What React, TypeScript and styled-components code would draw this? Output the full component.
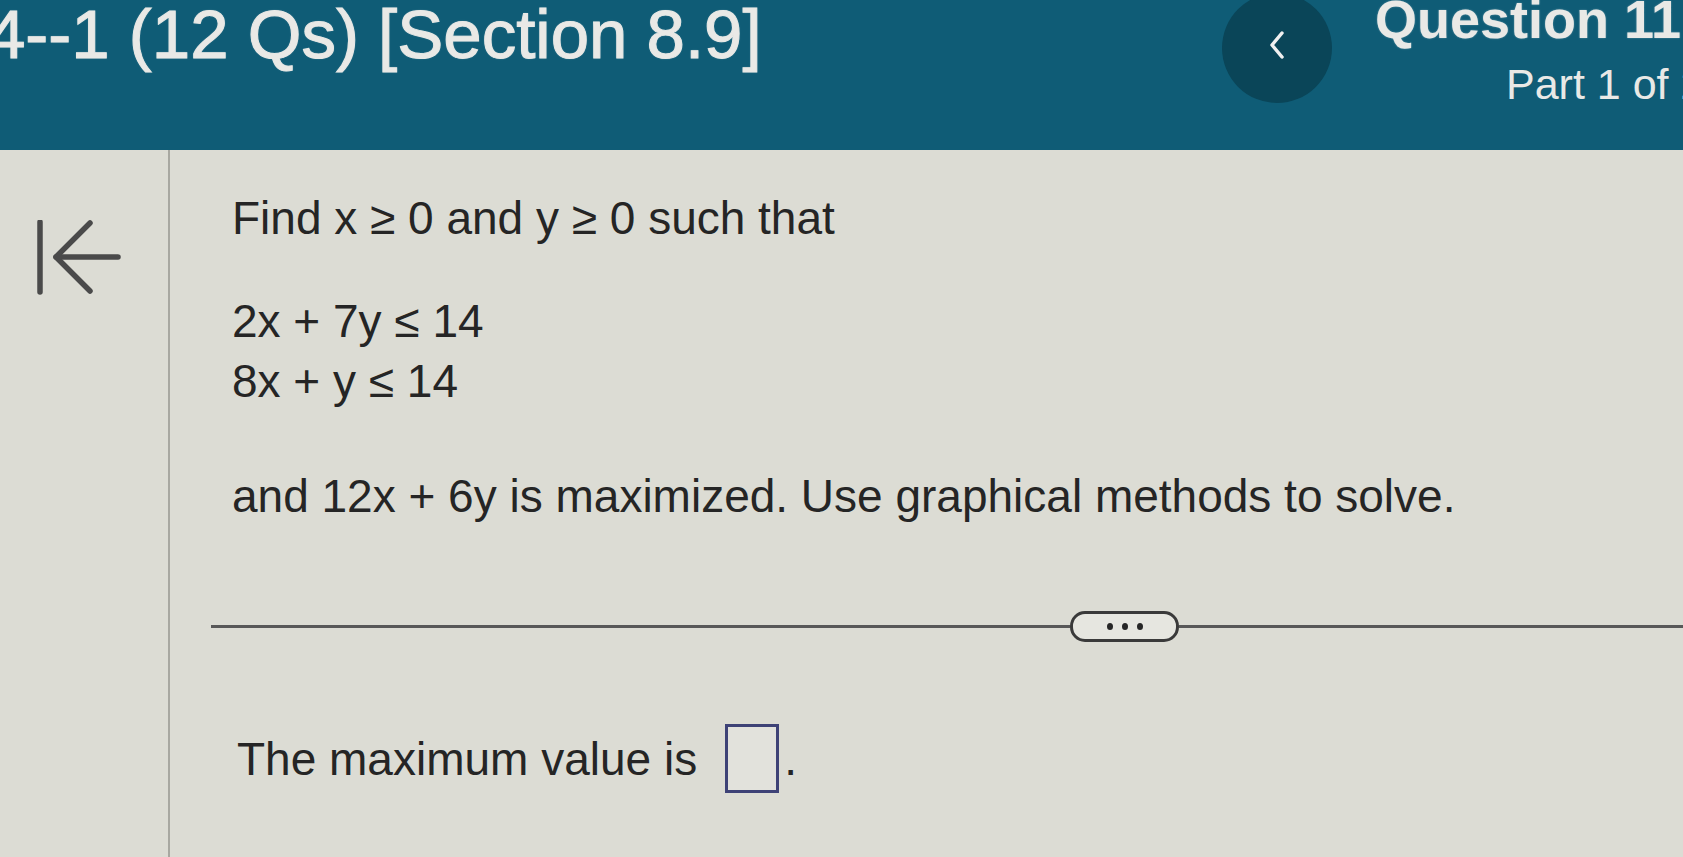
import styled, { createGlobalStyle } from "styled-components";

// tela de exercício: cabeçalho azul-petróleo, barra lateral e enunciado

const EstiloGlobal = createGlobalStyle`
  * {
    margin: 0;
    padding: 0;
    box-sizing: border-box;
  }

  html, body {
    width: 100%;
    height: 100%;
    overflow: hidden;
  }

  body {
    background-color: #dcdcd4;
    color: #252525;
    font-family: "Liberation Sans", Arial, Helvetica, sans-serif;
  }
`;

const Pagina = styled.div`
  width: 1683px;
  height: 857px;
  display: flex;
  flex-direction: column;
  overflow: hidden;
`;

// CABEÇALHO
const Cabecalho = styled.header`
  flex: 0 0 150px;
  display: flex;
  align-items: flex-start;
  background-color: #0f5c76;
  color: #e9e9e6;
  overflow: hidden;
`;

const TituloTarefa = styled.h1`
  flex: 1;
  margin-left: -13px;
  margin-top: 0;
  font-size: 69px;
  line-height: 69px;
  font-weight: 400;
  white-space: nowrap;
  -webkit-text-stroke: 1px #e9e9e6;
  text-shadow: 0 0 2px rgba(255, 255, 255, 0.35);
`;

const BotaoVoltar = styled.button`
  flex: 0 0 110px;
  height: 110px;
  margin-top: -7px;
  margin-right: 43px;
  border: none;
  border-radius: 50%;
  background-color: #0a4558;
  color: #f0f0f0;
  display: flex;
  align-items: center;
  justify-content: center;
  padding-bottom: 6px;
  cursor: pointer;
`;

// min-width: 0 para o bloco não crescer com o texto cortado na borda
const InfoQuestao = styled.div`
  flex: 0 0 308px;
  min-width: 0;
  display: flex;
  flex-direction: column;
  white-space: nowrap;
`;

const NumeroQuestao = styled.div`
  margin-top: -7px;
  font-size: 54px;
  line-height: 53px;
  font-weight: 700;
  text-shadow: 0 0 2px rgba(255, 255, 255, 0.35);
`;

const ParteQuestao = styled.div`
  margin-top: 17px;
  margin-left: 131px;
  font-size: 43px;
  line-height: 43px;
`;

// CORPO
const Corpo = styled.div`
  flex: 1;
  display: flex;
`;

const BarraLateral = styled.aside`
  flex: 0 0 170px;
  border-right: 2px solid #a8a8a1;
  padding: 70px 0 0 35px;
  color: #4a4a4a;
`;

const Conteudo = styled.main`
  flex: 1;
  padding: 38px 0 0 62px;
  display: flex;
  flex-direction: column;
  font-size: 46px;
  line-height: 60px;
`;

const Linha = styled.p<{ $espaco: number; $recuo?: number }>`
  margin-top: ${(p) => p.$espaco}px;
  margin-left: ${(p) => p.$recuo ?? 0}px;
  white-space: nowrap;
`;

const Divisor = styled.div`
  margin: 85px 0 0 -21px;
  display: flex;
  align-items: center;

  &::before,
  &::after {
    content: "";
    height: 3px;
    background-color: #585858;
  }

  &::before {
    flex: 0 0 859px;
  }

  &::after {
    flex: 1;
  }
`;

const BotaoMais = styled.div`
  flex: 0 0 109px;
  height: 31px;
  border: 3px solid #3a3a3a;
  border-radius: 15px;
  background-color: #e6e6e0;
  display: flex;
  align-items: center;
  justify-content: center;
  gap: 9px;
`;

const Ponto = styled.span`
  width: 6px;
  height: 7px;
  border-radius: 50%;
  background-color: #262626;
`;

const CaixaResposta = styled.span`
  display: inline-block;
  width: 54px;
  height: 69px;
  margin-left: 28px;
  vertical-align: -18px;
  border: 3px solid #3e4276;
  background-color: #e2e2dc;
`;

const PontoFinal = styled.span`
  margin-left: 5px;
`;

function IconeVoltarInicio() {
  return (
    <svg width="90" height="76" viewBox="0 0 90 76" fill="none">
      <g stroke="currentColor" strokeWidth="5.5" strokeLinecap="round" strokeLinejoin="round">
        <line x1="5" y1="2" x2="5" y2="72" />
        <line x1="21" y1="37" x2="83" y2="37" />
        <polyline points="55,3 21,37 55,71" />
      </g>
    </svg>
  );
}

export default function App() {
  return (
    <>
      <EstiloGlobal />
      <Pagina>
        <Cabecalho>
          <TituloTarefa>4--1 (12 Qs) [Section 8.9]</TituloTarefa>
          <BotaoVoltar aria-label="Questão anterior">
            <svg width="16" height="30" viewBox="0 0 16 30" fill="none">
              <polyline
                points="13,3 3,15 13,27"
                stroke="currentColor"
                strokeWidth="3.5"
                strokeLinecap="round"
                strokeLinejoin="round"
              />
            </svg>
          </BotaoVoltar>
          <InfoQuestao>
            <NumeroQuestao>Question 11</NumeroQuestao>
            <ParteQuestao>Part 1 of 2</ParteQuestao>
          </InfoQuestao>
        </Cabecalho>

        <Corpo>
          <BarraLateral>
            <IconeVoltarInicio />
          </BarraLateral>

          <Conteudo>
            <Linha $espaco={0}>Find x ≥ 0 and y ≥ 0 such that</Linha>
            <Linha $espaco={43}>2x + 7y ≤ 14</Linha>
            <Linha $espaco={0}>8x + y ≤ 14</Linha>
            <Linha $espaco={55}>
              and 12x + 6y is maximized. Use graphical methods to solve.
            </Linha>

            <Divisor>
              <BotaoMais>
                <Ponto />
                <Ponto />
                <Ponto />
              </BotaoMais>
            </Divisor>

            <Linha $espaco={82} $recuo={5}>
              The maximum value is
              <CaixaResposta />
              <PontoFinal>.</PontoFinal>
            </Linha>
          </Conteudo>
        </Corpo>
      </Pagina>
    </>
  );
}
